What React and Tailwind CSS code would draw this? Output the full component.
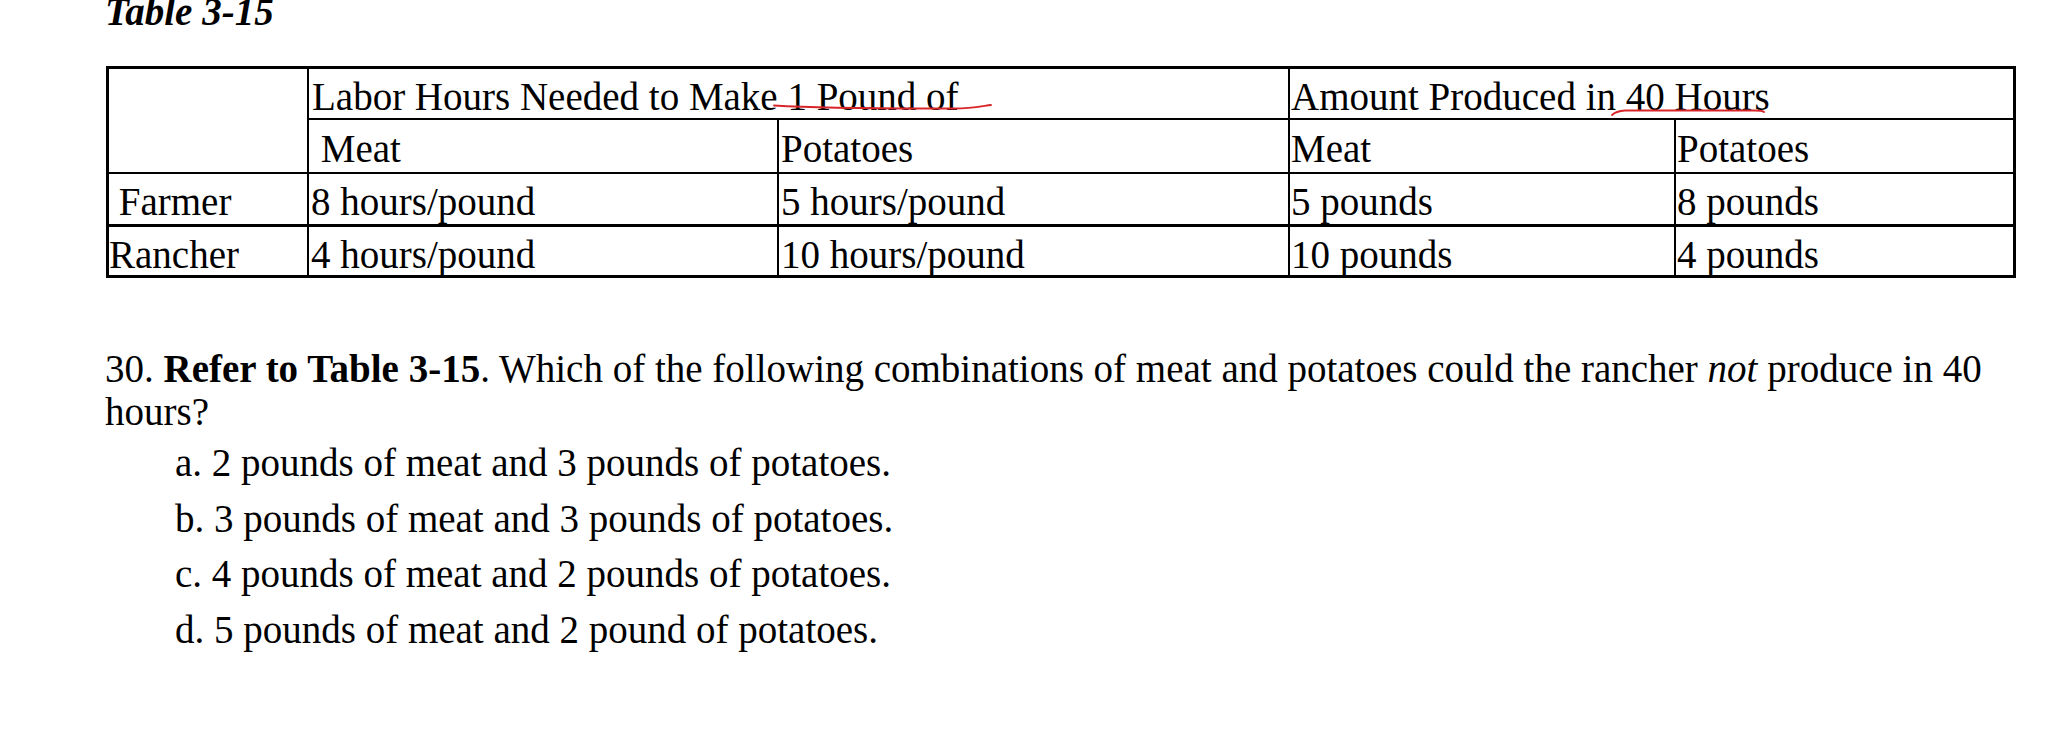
const cell = 'border-black whitespace-nowrap text-[39px] leading-[44px]'

const rows = [
  ['\u00a0Farmer', '8 hours/pound', '5 hours/pound', '5 pounds', '8 pounds'],
  ['Rancher', '4 hours/pound', '10 hours/pound', '10 pounds', '4 pounds'],
]

const options = [
  'a. 2 pounds of meat and 3 pounds of potatoes.',
  'b. 3 pounds of meat and 3 pounds of potatoes.',
  'c. 4 pounds of meat and 2 pounds of potatoes.',
  'd. 5 pounds of meat and 2 pound of potatoes.',
]

export default function App() {
  return (
    <div className="relative h-[756px] w-[2048px] overflow-hidden bg-white text-black font-['Liberation_Serif','Times_New_Roman',serif]">
      <div className="pl-[105px]">
        <div className="-mt-[10px] text-[39px] leading-[44px] font-bold italic">Table 3-15</div>

        {/* table */}
        <div className="ml-[1px] mt-[32px] grid w-fit grid-cols-[200px_470px_511px_386px_337px] grid-rows-[51px_54px_53px_48px] border-[3px] border-black">
          <div className={`${cell} row-span-2 border-r-2 border-b-2`} />
          <div className={`${cell} col-span-2 border-r-2 border-b-2 pl-[3px] pt-[6px]`}>Labor Hours Needed to Make 1 Pound of</div>
          <div className={`${cell} col-span-2 border-b-2 pl-[1px] pt-[6px]`}>Amount Produced in 40 Hours</div>

          <div className={`${cell} border-r-2 border-b-2 pl-[2px] pt-[7px]`}>{'\u00a0'}Meat</div>
          <div className={`${cell} border-r-2 border-b-2 pl-[2px] pt-[7px]`}>Potatoes</div>
          <div className={`${cell} border-r-2 border-b-2 pl-[1px] pt-[7px]`}>Meat</div>
          <div className={`${cell} border-b-2 pl-[1px] pt-[7px]`}>Potatoes</div>

          {rows.map((r, ri) =>
            r.map((txt, ci) => (
              <div
                key={`${ri}-${ci}`}
                className={`${cell} pt-[6px] ${ci < 4 ? 'border-r-2' : ''} ${ri === 0 ? 'border-b-[3px]' : ''} ${ci === 0 ? 'pl-0' : ci < 3 ? 'pl-[2px]' : 'pl-[1px]'}`}
              >
                {txt}
              </div>
            ))
          )}
        </div>

        {/* question */}
        <div className="mt-[69px] text-[39px] leading-[43px]">
          <div className="whitespace-nowrap">
            30. <b>Refer to Table 3-15</b>. Which of the following combinations of meat and potatoes could the rancher <i>not</i> produce in 40
          </div>
          <div>hours?</div>
        </div>
        <div className="mt-[2px] pl-[70px] text-[39px] leading-[55.5px]">
          {options.map((o) => (
            <div key={o} className="whitespace-nowrap">{o}</div>
          ))}
        </div>
      </div>

      {/* red pen marks */}
      <svg className="pointer-events-none absolute left-0 top-0" width="2048" height="756">
        <path d="M774 105.5 C830 109 900 108.5 955 108.5 C970 108.5 980 106.5 991 105" fill="none" stroke="#d9252a" strokeWidth="1.8" strokeLinecap="round" />
        <path d="M1612 115 C1615 112 1618 111 1625 110.5 L1755 110.5 C1760 110.5 1763 111 1764 112" fill="none" stroke="#d9252a" strokeWidth="1.8" strokeLinecap="round" />
      </svg>
    </div>
  )
}
